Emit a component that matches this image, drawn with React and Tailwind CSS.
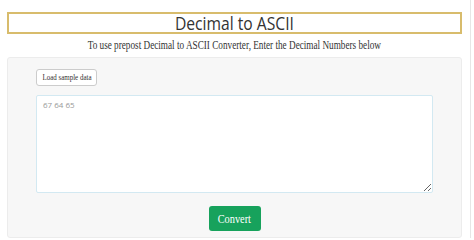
export default function App() {
  return (
    <div className="w-[474px] h-[238px] overflow-hidden bg-white flex">
      <div className="w-[7px] shrink-0" />
      <div className="w-[455px] shrink-0 pt-[12px] flex flex-col">
        <div className="h-[22px] border-2 border-[#d8bc6c] flex items-center justify-center">
          <h1 className="inline-block scale-x-[0.87] text-[18px] leading-none text-[#333] font-['Open_Sans',sans-serif]">
            Decimal to ASCII
          </h1>
        </div>
        <div className="mt-[3px] h-[17px] flex items-center justify-center">
          <p className="whitespace-nowrap inline-block scale-x-[0.8] text-[11.5px] leading-[17px] text-[#333] font-['Liberation_Serif',serif]">
            To use prepost Decimal to ASCII Converter, Enter the Decimal Numbers below
          </p>
        </div>
        <div className="mt-[3px] flex-1 bg-[#f7f7f7] border border-[#ececec] rounded-[3px] px-[28px] pt-[11px] flex flex-col">
          <div className="flex">
            <button className="w-[61px] h-[17px] bg-white border border-[#ccc] rounded-[3px] flex items-center justify-center">
              <span className="inline-block whitespace-nowrap scale-x-[0.82] text-[8.5px] leading-none text-[#333] font-['Liberation_Serif',serif]">
                Load sample data
              </span>
            </button>
          </div>
          <textarea
            className="mt-[9px] h-[98px] w-full bg-white border border-[#d3e9f2] rounded-[2px] px-[6px] py-[2px] text-[8px] leading-[13px] text-[#999] font-['Open_Sans',sans-serif] outline-none resize-y"
            defaultValue="67 64 65"
          />
          <div className="mt-[13px] flex justify-center">
            <button className="w-[52px] h-[25px] bg-[#17a25c] rounded-[3px] flex items-center justify-center">
              <span className="inline-block scale-x-[0.86] text-white text-[12px] leading-none font-['Liberation_Serif',serif]">
                Convert
              </span>
            </button>
          </div>
        </div>
      </div>
      <div className="w-[8px] shrink-0" />
      <div className="w-px shrink-0 bg-[#e6e6e6]" />
    </div>
  );
}
